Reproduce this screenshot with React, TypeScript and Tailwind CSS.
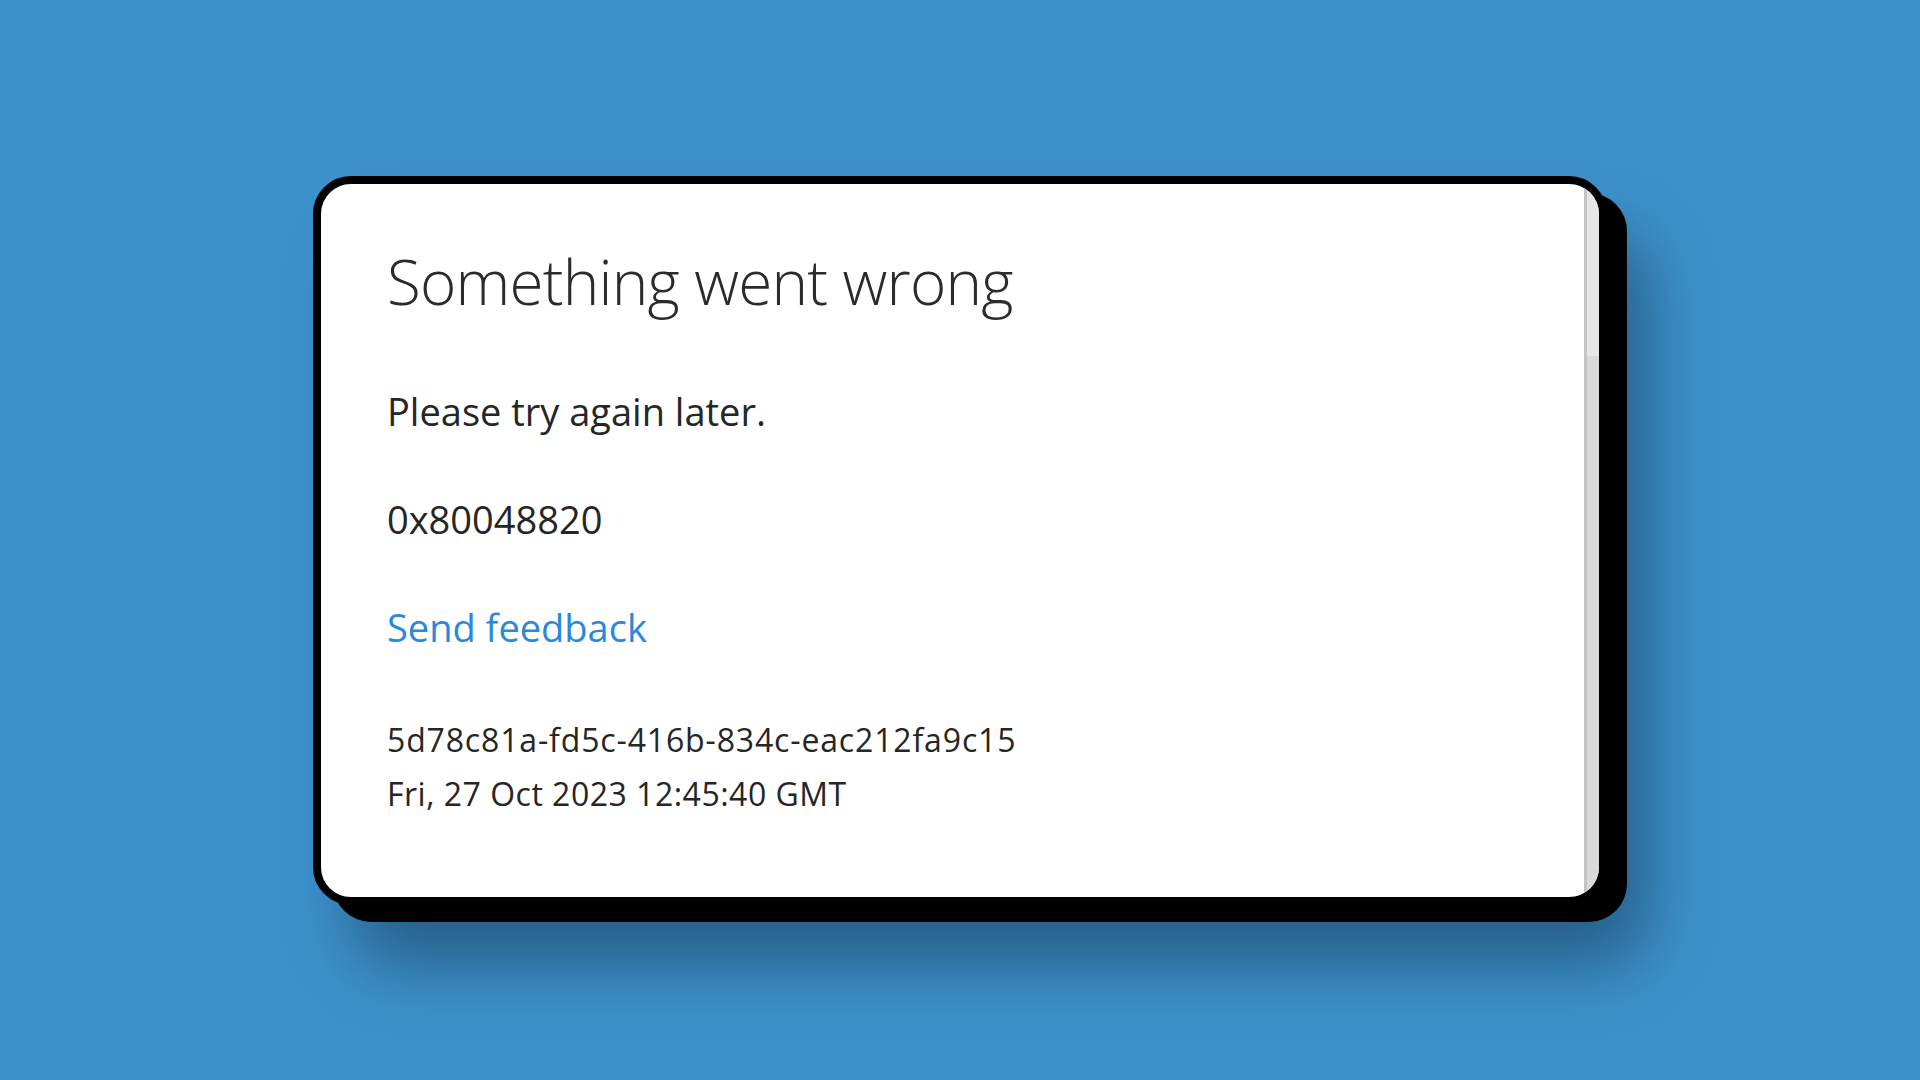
const App = () => {
  return (
    <div className="flex h-screen w-full items-center justify-center bg-[#3d92cc] font-['Open_Sans','Noto_Sans',sans-serif]">
      <div className="flex h-[729px] w-[1294px] overflow-hidden rounded-[38px] border-[8px] border-black bg-white shadow-[20px_17px_0_0_#000,40px_60px_70px_rgba(10,30,50,0.45)]">
        <div className="flex-1 pl-[66px] pt-[59px] text-[#262626]">
          <h1 className="text-[62px] font-light leading-[76px] tracking-[-0.8px] text-[#2b2b2b]">
            Something went wrong
          </h1>
          <p className="mt-[68px] text-[38px] leading-[48px]">
            Please try again later.
          </p>
          <p className="mt-[60px] text-[38px] leading-[48px]">0x80048820</p>
          <a className="mt-[60px] block text-[38px] leading-[48px] text-[#2a88dc]">
            Send feedback
          </a>
          <div className="mt-[62px] text-[32px] leading-[54px]">
            <p className="tracking-[0.85px]">5d78c81a-fd5c-416b-834c-eac212fa9c15</p>
            <p className="tracking-[0.5px]">Fri, 27 Oct 2023 12:45:40 GMT</p>
          </div>
        </div>
        <div className="flex w-[15px] flex-col border-l-[3px] border-[#c4c4c4]">
          <div className="h-[172px] bg-[#e6e6e6]" />
          <div className="flex-1 bg-[#d9d9d9]" />
        </div>
      </div>
    </div>
  );
};

export default App;
